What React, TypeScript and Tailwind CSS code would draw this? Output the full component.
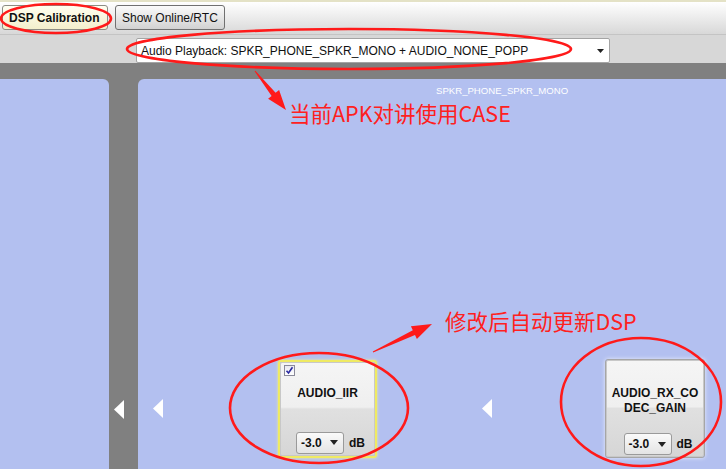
import React from 'react';

const ui = { fontFamily: '"Liberation Sans", Arial, sans-serif' };
const cjk = { fontFamily: '"Noto Sans CJK SC", "Liberation Sans", sans-serif' };

function LeftTriangle() {
  return (
    <svg width="10" height="19" viewBox="0 0 10 19" className="shrink-0">
      <polygon points="10,0 10,19 0,9.5" fill="#ffffff" />
    </svg>
  );
}

function DbSelect({ value }: { value: string }) {
  return (
    <div className="flex items-center gap-[5px]">
      <div className="flex h-[22px] w-[48px] items-center justify-between rounded-[3px] border border-[#9a9a9a] bg-gradient-to-b from-[#fafafa] to-[#e4e4e4] pl-[4px] pr-[5px] text-[12px] font-bold text-[#111]">
        <span>{value}</span>
        <svg width="8" height="5" viewBox="0 0 8 5">
          <polygon points="0,0 8,0 4,5" fill="#222" />
        </svg>
      </div>
      <span className="text-[12px] font-bold text-[#111]">dB</span>
    </div>
  );
}

function ModuleCard({ title, checked, active }: { title: string[]; checked?: boolean; active?: boolean }) {
  return (
    <div
      className={
        active
          ? 'h-[98px] w-[99px] shrink-0 rounded-[3px] border-2 border-[#efea63] shadow-[0_0_3px_#f4f08a]'
          : 'h-[99px] w-[100px] shrink-0 rounded-[3px] border border-[#a6a6a6] shadow-[0_0_4px_rgba(255,255,255,0.7)]'
      }
    >
      <div className="flex h-full flex-col rounded-[2px] border border-[#c8c8c8] bg-[linear-gradient(to_bottom,#f5f5f5_0%,#efefef_48%,#e0e0e0_50%,#d6d6d6_100%)]">
        <div className="h-[16px] pl-[3px] pt-[2px]">
          {checked && (
            <div className="flex h-[11px] w-[11px] items-center justify-center border border-[#8a8a9a] bg-gradient-to-b from-[#e8e8f0] to-[#ffffff]">
              <svg width="9" height="9" viewBox="0 0 9 9">
                <path d="M1.5 4.8 L3.5 7 L7.5 1.2" stroke="#2a2aa0" strokeWidth="1.6" fill="none" />
              </svg>
            </div>
          )}
        </div>
        <div
          className={
            title.length > 1
              ? 'flex h-[48px] flex-col items-center justify-center text-[12px] font-bold leading-[15px] text-[#111]'
              : 'flex h-[30px] flex-col items-center justify-center text-[12px] font-bold leading-[15px] text-[#111]'
          }
        >
          {title.map((t) => (
            <span key={t}>{t}</span>
          ))}
        </div>
        <div className="flex flex-1 items-end justify-center pb-[1px] pl-[6px]">
          <DbSelect value="-3.0" />
        </div>
      </div>
    </div>
  );
}

export default function App() {
  return (
    <div className="relative flex h-[469px] w-[726px] flex-col overflow-hidden bg-[#808080]" style={ui}>
      {/* toolbar */}
      <div className="flex h-[34px] items-start gap-[7px] border-t-2 border-[#e4e2c6] bg-gradient-to-b from-[#ffffff] to-[#d8d8d8] pl-[2px] pt-[3px]">
        <button className="h-[25px] w-[106px] rounded-[3px] border border-[#8c8c84] bg-gradient-to-b from-[#fffef0] to-[#f3efcc] pl-[6px] text-left text-[12px] font-bold text-[#111]">
          DSP Calibration
        </button>
        <button className="h-[25px] w-[110px] overflow-hidden whitespace-nowrap rounded-[3px] border border-[#707070] bg-gradient-to-b from-[#fbfbfb] to-[#d2d2d2] pl-[6px] text-left text-[12px] text-[#111]">
          Show Online/RTC
        </button>
      </div>

      {/* use case bar */}
      <div className="h-[29px] border-t border-[#c4c4c4] bg-[#d7d7d7] pl-[136px] pt-[3px]">
        <div className="flex h-[25px] w-[474px] items-center justify-between rounded-[2px] border border-[#a4a4a4] bg-white pl-[4px] pr-[5px] text-[12px] text-[#111]">
          <span>Audio Playback: SPKR_PHONE_SPKR_MONO + AUDIO_NONE_POPP</span>
          <svg width="7" height="4" viewBox="0 0 7 4">
            <polygon points="0,0 7,0 3.5,4" fill="#222" />
          </svg>
        </div>
      </div>

      {/* panels */}
      <div className="flex flex-1 pt-[16px]">
        <div className="w-[109px] shrink-0 rounded-tr-[6px] bg-[#b3c0f0]" />
        <div className="flex w-[29px] shrink-0 flex-col justify-end pb-[50px] pl-[5px]">
          <LeftTriangle />
        </div>
        <div className="flex flex-1 flex-col rounded-tl-[6px] bg-[#b3c0f0]">
          <div className="pl-[298px] pt-[5px] text-[9.6px] text-white">SPKR_PHONE_SPKR_MONO</div>
          <div className="flex-1" />
          <div className="mb-[11px] flex h-[99px] items-center pl-[15px]">
            <LeftTriangle />
            <div className="ml-[115px]">
              <ModuleCard title={['AUDIO_IIR']} checked active />
            </div>
            <div className="ml-[105px]">
              <LeftTriangle />
            </div>
            <div className="ml-[113px]">
              <ModuleCard title={['AUDIO_RX_CO', 'DEC_GAIN']} />
            </div>
          </div>
        </div>
      </div>

      {/* annotations */}
      <span className="absolute left-[289px] top-[102px] text-[21.5px] leading-none text-[#ff2020]" style={cjk}>
        当前APK对讲使用CASE
      </span>
      <span className="absolute left-[445px] top-[310px] text-[21.5px] leading-none text-[#ff2020]" style={cjk}>
        修改后自动更新DSP
      </span>
      <svg className="pointer-events-none absolute left-0 top-0" width="726" height="469" viewBox="0 0 726 469">
        <g fill="none" stroke="#ff1a1a" strokeWidth="2.6">
          <ellipse cx="56" cy="18.5" rx="55" ry="14.5" />
          <ellipse cx="349" cy="49" rx="222" ry="20" />
          <ellipse cx="319" cy="408" rx="89" ry="55" />
          <ellipse cx="641" cy="402" rx="80" ry="64" />
        </g>
        <g fill="#ff1a1a">
          <polygon points="254.6,71.3 271.6,95.9 268.1,98.7 286,110 279.1,90.1 275.6,92.8 255.4,70.7" />
          <polygon points="373.2,352.5 415,334.9 416.9,338.9 432,324 410.9,326.3 412.8,330.3 372.8,351.5" />
        </g>
      </svg>
    </div>
  );
}
